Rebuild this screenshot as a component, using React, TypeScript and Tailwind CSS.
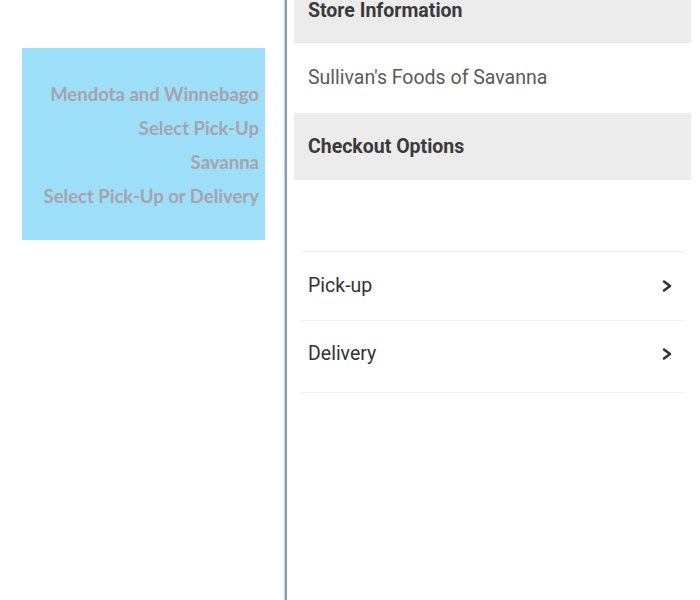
import React from 'react';

const notes = ["Mendota and Winnebago", "Select Pick-Up", "Savanna", "Select Pick-Up or Delivery"];

function Chevron() {
  return (
    <svg width="12" height="14" viewBox="0 0 12 14" className="text-[#333]">
      <path d="M3 2.5 L9 7 L3 11.5" fill="none" stroke="currentColor" strokeWidth="2.6" strokeLinecap="round" strokeLinejoin="round" />
    </svg>
  );
}

export default function App() {
  return (
    <div className="w-[700px] h-[600px] bg-white flex overflow-hidden">
      {/* annotation panel */}
      <div className="w-[284px] shrink-0 pt-[48px] pl-[22px]">
        <div className="w-[243px] h-[192px] bg-[#9ddff8] pt-[29px] pr-[6px] flex flex-col items-end font-['Lato',sans-serif] font-bold text-[18.5px] leading-[34px] text-[#a7a3a9]">
          {notes.map((n) => (
            <span key={n}>{n}</span>
          ))}
        </div>
      </div>

      {/* divider */}
      <div className="w-[3px] h-full bg-[#8c9cb8] border-l border-[#c9d0de]" />

      {/* phone screen */}
      <div className="flex-1 pl-[7px] pr-[9px] font-['Roboto',sans-serif] text-[19.5px]">
        <div className="h-[43px] bg-[#ececec] pl-[14px] flex items-start leading-[22px] font-bold text-[#3a3a3a]">
          Store Information
        </div>
        <div className="h-[70px] pl-[14px] flex items-center text-[#5a5a5a]">
          Sullivan's Foods of Savanna
        </div>
        <div className="h-[67px] bg-[#ececec] pl-[14px] flex items-center font-bold text-[#3a3a3a]">
          Checkout Options
        </div>
        <div className="h-[72px] border-b border-[#f0f0f0] mx-[6px]" />
        <div className="h-[69px] mx-[6px] pl-[8px] pr-[12px] flex items-center justify-between border-b border-[#f0f0f0] text-[#333]">
          <span>Pick-up</span>
          <Chevron />
        </div>
        <div className="h-[72px] mx-[6px] pl-[8px] pr-[12px] pb-[6px] flex items-center justify-between border-b border-[#f0f0f0] text-[#333]">
          <span>Delivery</span>
          <Chevron />
        </div>
      </div>
    </div>
  );
}
